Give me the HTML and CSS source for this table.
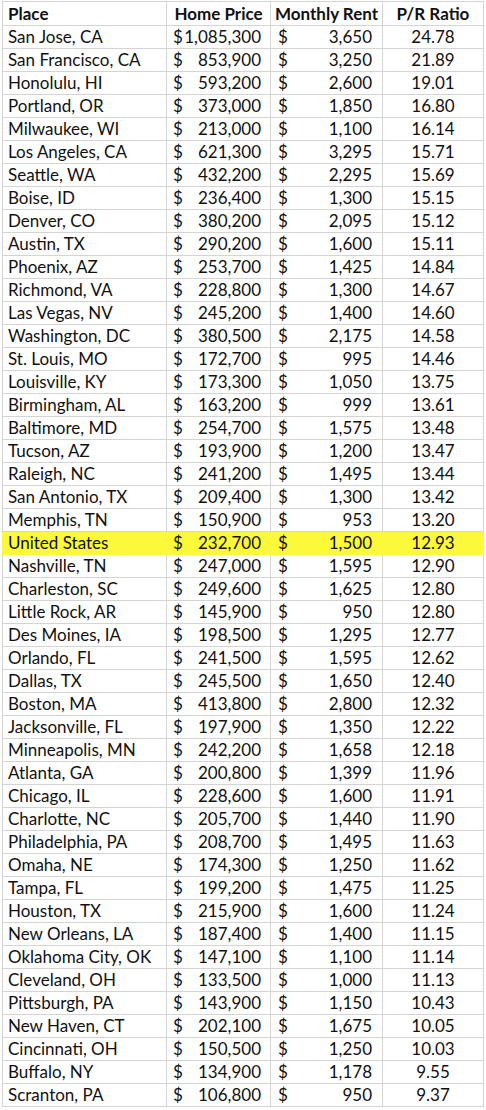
FILE: index.html
```html
<!DOCTYPE html>
<html lang="en">
<head>
  <meta charset="UTF-8">
  <title>Price to Rent Ratio</title>
  <link rel="stylesheet" href="styles.css">
</head>
<body>

  <table id="pr-table">
    <thead>
      <tr>
        <th class="col-place">Place</th>
        <th class="col-price">Home Price</th>
        <th class="col-rent">Monthly Rent</th>
        <th class="col-ratio">P/R Ratio</th>
      </tr>
    </thead>
    <tbody></tbody>
  </table>

  <script>
    const rows = [
      ["San Jose, CA", "1,085,300", "3,650", "24.78"],
      ["San Francisco, CA", "853,900", "3,250", "21.89"],
      ["Honolulu, HI", "593,200", "2,600", "19.01"],
      ["Portland, OR", "373,000", "1,850", "16.80"],
      ["Milwaukee, WI", "213,000", "1,100", "16.14"],
      ["Los Angeles, CA", "621,300", "3,295", "15.71"],
      ["Seattle, WA", "432,200", "2,295", "15.69"],
      ["Boise, ID", "236,400", "1,300", "15.15"],
      ["Denver, CO", "380,200", "2,095", "15.12"],
      ["Austin, TX", "290,200", "1,600", "15.11"],
      ["Phoenix, AZ", "253,700", "1,425", "14.84"],
      ["Richmond, VA", "228,800", "1,300", "14.67"],
      ["Las Vegas, NV", "245,200", "1,400", "14.60"],
      ["Washington, DC", "380,500", "2,175", "14.58"],
      ["St. Louis, MO", "172,700", "995", "14.46"],
      ["Louisville, KY", "173,300", "1,050", "13.75"],
      ["Birmingham, AL", "163,200", "999", "13.61"],
      ["Baltimore, MD", "254,700", "1,575", "13.48"],
      ["Tucson, AZ", "193,900", "1,200", "13.47"],
      ["Raleigh, NC", "241,200", "1,495", "13.44"],
      ["San Antonio, TX", "209,400", "1,300", "13.42"],
      ["Memphis, TN", "150,900", "953", "13.20"],
      ["United States", "232,700", "1,500", "12.93"],
      ["Nashville, TN", "247,000", "1,595", "12.90"],
      ["Charleston, SC", "249,600", "1,625", "12.80"],
      ["Little Rock, AR", "145,900", "950", "12.80"],
      ["Des Moines, IA", "198,500", "1,295", "12.77"],
      ["Orlando, FL", "241,500", "1,595", "12.62"],
      ["Dallas, TX", "245,500", "1,650", "12.40"],
      ["Boston, MA", "413,800", "2,800", "12.32"],
      ["Jacksonville, FL", "197,900", "1,350", "12.22"],
      ["Minneapolis, MN", "242,200", "1,658", "12.18"],
      ["Atlanta, GA", "200,800", "1,399", "11.96"],
      ["Chicago, IL", "228,600", "1,600", "11.91"],
      ["Charlotte, NC", "205,700", "1,440", "11.90"],
      ["Philadelphia, PA", "208,700", "1,495", "11.63"],
      ["Omaha, NE", "174,300", "1,250", "11.62"],
      ["Tampa, FL", "199,200", "1,475", "11.25"],
      ["Houston, TX", "215,900", "1,600", "11.24"],
      ["New Orleans, LA", "187,400", "1,400", "11.15"],
      ["Oklahoma City, OK", "147,100", "1,100", "11.14"],
      ["Cleveland, OH", "133,500", "1,000", "11.13"],
      ["Pittsburgh, PA", "143,900", "1,150", "10.43"],
      ["New Haven, CT", "202,100", "1,675", "10.05"],
      ["Cincinnati, OH", "150,500", "1,250", "10.03"],
      ["Buffalo, NY", "134,900", "1,178", "9.55"],
      ["Scranton, PA", "106,800", "950", "9.37"]
    ];

    const tbody = document.querySelector("#pr-table tbody");
    rows.forEach(r => {
      const cls = r[0] === "United States" ? ' class="highlight"' : "";
      tbody.innerHTML += `
        <tr${cls}>
          <td class="col-place">${r[0]}</td>
          <td class="col-price"><span class="money"><span>$</span><span>${r[1]}</span></span></td>
          <td class="col-rent"><span class="money"><span>$</span><span>${r[2]}</span></span></td>
          <td class="col-ratio">${r[3]}</td>
        </tr>`;
    });
  </script>

</body>
</html>
```

FILE: styles.css
```css
* {
  box-sizing: border-box;
}

body {
  margin: 0;
  padding: 1px 0 0 2px;
  background: #ffffff;
  color: #111111;
  font-family: Lato, 'Open Sans', sans-serif;
  font-size: 17px;
}

table {
  border-collapse: collapse;
  table-layout: fixed;
  width: 481px;
}

th, td {
  border: 1px solid #d4d4d4;
  padding: 0;
  height: 23px;
  white-space: nowrap;
  vertical-align: middle;
  line-height: 20px;
}

th {
  height: 24px;
  font-weight: 700;
  text-align: center;
}

.col-place {
  width: 164px;
  padding-left: 5px;
  text-align: left;
}

.col-price {
  width: 104px;
  padding: 0 9px 0 6px;
}

.col-rent {
  width: 112px;
  padding: 0 10px 0 7px;
}

.col-ratio {
  width: 101px;
  text-align: center;
}

th.col-price,
th.col-rent {
  padding: 0;
}

.money {
  display: flex;
  justify-content: space-between;
}

.highlight td {
  background: #fbf93a;
  border-color: #fbf93a;
}
```
